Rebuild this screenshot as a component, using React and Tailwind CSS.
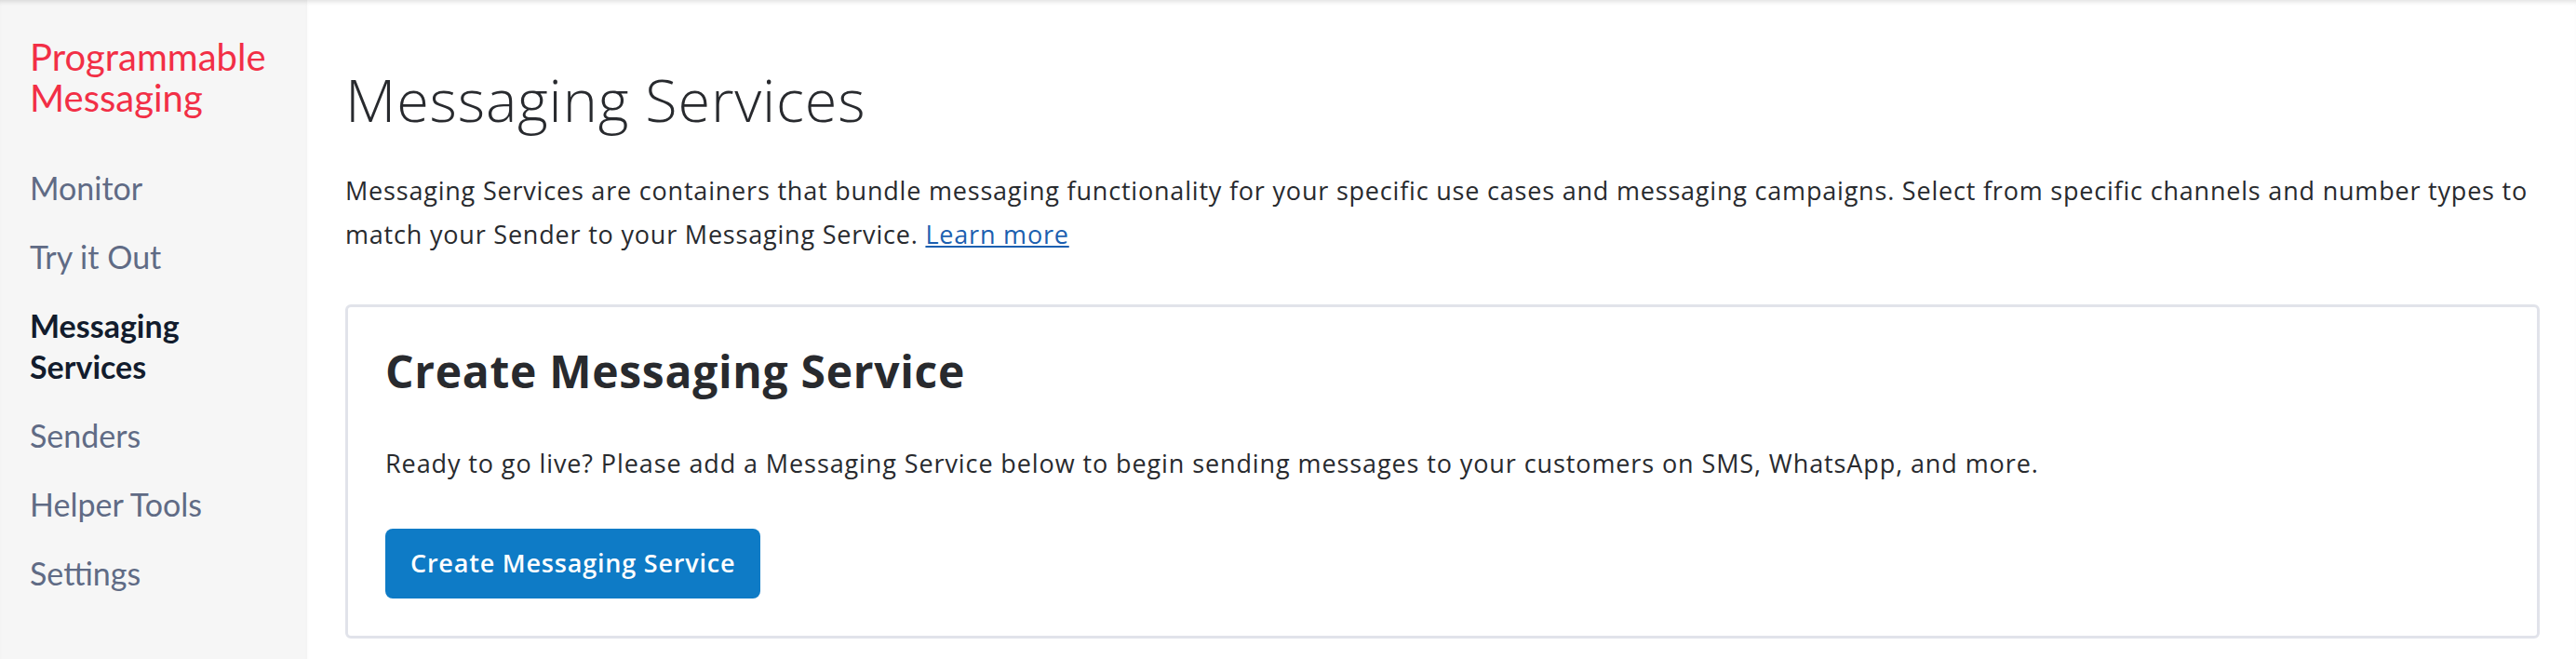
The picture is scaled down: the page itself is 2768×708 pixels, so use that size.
const navItems = ["Monitor", "Try it Out", "Messaging Services", "Senders", "Helper Tools", "Settings"];

export default function App() {
  return (
    <div className="flex h-[708px] w-full bg-white font-['Open_Sans',sans-serif] text-[#282a2e]">
      <aside className="w-[330px] shrink-0 bg-[#f6f6f6] pl-[32px] pt-[39px] font-['Lato',sans-serif] shadow-[inset_0_5px_5px_-3px_rgba(0,0,0,0.12)]">
        <h2 className="w-[280px] text-[40px] leading-[44px] text-[#f22f46]">Programmable Messaging</h2>
        <nav className="mt-[53px] flex flex-col gap-[30px]">
          {navItems.map((item) => (
            <a
              key={item}
              className={`w-[280px] text-[34px] leading-[44px] ${
                item === "Messaging Services" ? "font-bold text-[#121c2d]" : "text-[#606b85]"
              }`}
            >
              {item === "Messaging Services" ? (
                <>
                  Messaging
                  <br />
                  Services
                </>
              ) : (
                item
              )}
            </a>
          ))}
        </nav>
      </aside>

      <main className="flex-1 pl-[41px] pr-[39px] pt-[70px] shadow-[inset_0_5px_5px_-3px_rgba(0,0,0,0.12)]">
        <h1 className="text-[63px] font-light leading-[74px] tracking-[0.8px]">Messaging Services</h1>
        <p className="mt-[37px] text-[27px] leading-[47px] tracking-[0.8px]">
          Messaging Services are containers that bundle messaging functionality for your specific use cases and messaging
          campaigns. Select from specific channels and number types to match your Sender to your Messaging Service.{" "}
          <a className="text-[#1c5fb0] underline underline-offset-2">Learn more</a>
        </p>

        <section className="mt-[52px] rounded-[6px] border-[3px] border-[#e1e3ea] p-[40px]">
          <h3 className="text-[48px] font-bold leading-[58px] tracking-[0.7px]">Create Messaging Service</h3>
          <p className="mt-[52px] text-[27px] leading-[36px] tracking-[0.9px]">
            Ready to go live? Please add a Messaging Service below to begin sending messages to your customers on SMS,
            WhatsApp, and more.
          </p>
          <button
            type="button"
            className="mt-[52px] flex h-[75px] items-center rounded-[8px] bg-[#0e7bc6] px-[27px] text-[27px] font-semibold tracking-[0.8px] text-white"
          >
            Create Messaging Service
          </button>
        </section>
      </main>
    </div>
  );
}
